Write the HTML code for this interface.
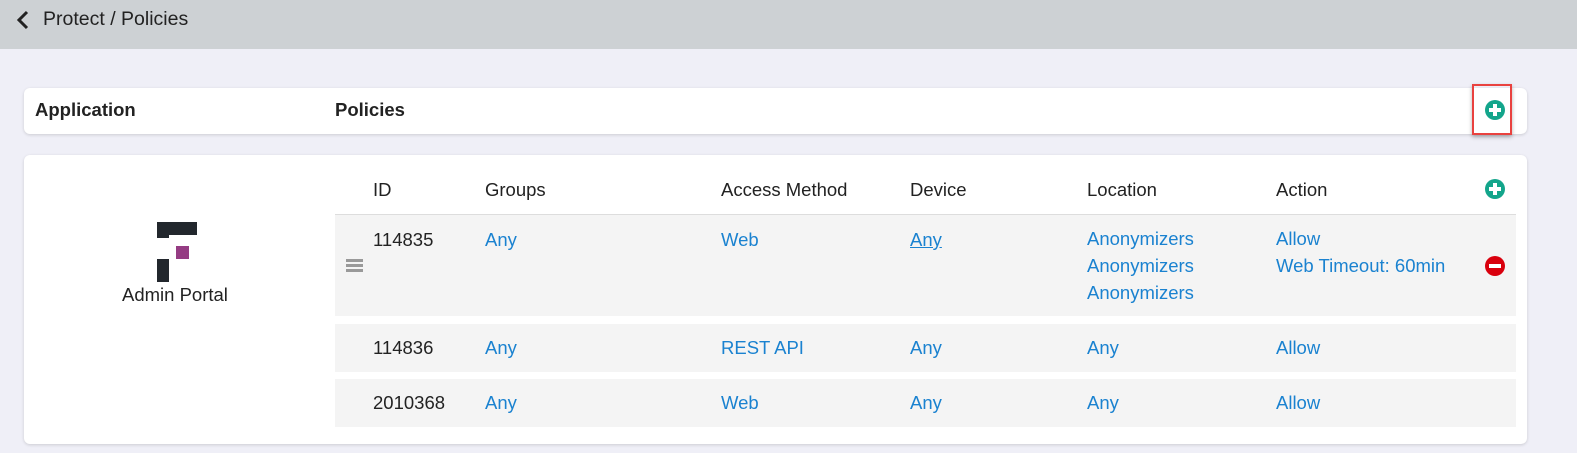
<!DOCTYPE html>
<html><head><style>
body{margin:0;width:1577px;height:453px;background:#efeff7;font-family:"Liberation Sans",sans-serif;position:relative;overflow:hidden;color:#222}
.t{position:absolute;font-size:18.5px;white-space:nowrap}
.b{color:#1a82d0}
.hdr{position:absolute;left:0;top:0;width:1577px;height:49px;background:#cdd1d4}
.card{position:absolute;background:#fff;border-radius:6px;box-shadow:0 1px 3px rgba(0,0,0,.15)}
.row{position:absolute;left:335px;width:1181px;background:#f4f4f4}
</style></head><body>
<div class="hdr"></div>
<svg style="position:absolute;left:15px;top:10px" width="16" height="20"><path d="M12 2 L4 10 L12 18" stroke="#222" stroke-width="3" fill="none"/></svg>
<div class="t" style="left:43px;top:8px;font-size:19.5px">Protect / Policies</div>
<div class="card" style="left:24px;top:88px;width:1503px;height:46px"></div>
<div class="t" style="left:35px;top:99px;font-weight:bold">Application</div>
<div class="t" style="left:335px;top:99px;font-weight:bold">Policies</div>
<div style="position:absolute;left:1472px;top:84px;width:40px;height:51px;border:2px solid #e9423f;box-sizing:border-box;box-shadow:0 2px 4px rgba(0,0,0,.3)"></div>
<svg style="position:absolute;left:1484px;top:99px" width="22" height="22"><circle cx="11" cy="11" r="10" fill="#13a58b"/><path d="M11 5v12M5 11h12" stroke="#fff" stroke-width="4"/></svg>
<div class="card" style="left:24px;top:155px;width:1503px;height:289px"></div>
<div style="position:absolute;left:157px;top:222px;width:40px;height:13px;background:#22272d"></div>
<div style="position:absolute;left:157px;top:222px;width:12px;height:16px;background:#22272d"></div>
<div style="position:absolute;left:157px;top:259px;width:12px;height:23px;background:#22272d"></div>
<div style="position:absolute;left:176px;top:246px;width:13px;height:13px;background:#953c83"></div>
<div class="t" style="left:122px;top:284px">Admin Portal</div>
<div class="t" style="left:373px;top:179px">ID</div>
<div class="t" style="left:485px;top:179px">Groups</div>
<div class="t" style="left:721px;top:179px">Access Method</div>
<div class="t" style="left:910px;top:179px">Device</div>
<div class="t" style="left:1087px;top:179px">Location</div>
<div class="t" style="left:1276px;top:179px">Action</div>
<svg style="position:absolute;left:1484px;top:178px" width="22" height="22"><circle cx="11" cy="11" r="10" fill="#13a58b"/><path d="M11 5v12M5 11h12" stroke="#fff" stroke-width="4"/></svg>
<div style="position:absolute;left:335px;top:214px;width:1181px;height:1px;background:#ddd"></div>
<div class="row" style="top:215px;height:101px"></div>
<div class="row" style="top:324px;height:48px"></div>
<div class="row" style="top:379px;height:48px"></div>
<div style="position:absolute;left:346px;top:259px;width:17px;height:3px;background:#999;box-shadow:0 5px 0 #999,0 10px 0 #999"></div>
<div class="t" style="left:373px;top:229px">114835</div>
<div class="t b" style="left:485px;top:229px">Any</div>
<div class="t b" style="left:721px;top:229px">Web</div>
<div class="t b" style="left:910px;top:229px;text-decoration:underline">Any</div>
<div class="t b" style="left:1087px;top:225px;line-height:27px">Anonymizers<br>Anonymizers<br>Anonymizers</div>
<div class="t b" style="left:1276px;top:225px;line-height:27px">Allow<br>Web Timeout: 60min</div>
<svg style="position:absolute;left:1484px;top:255px" width="22" height="22"><circle cx="11" cy="11" r="10" fill="#d9000d"/><path d="M5 11h12" stroke="#fff" stroke-width="4"/></svg>
<div class="t" style="left:373px;top:337px">114836</div>
<div class="t b" style="left:485px;top:337px">Any</div>
<div class="t b" style="left:721px;top:337px">REST API</div>
<div class="t b" style="left:910px;top:337px">Any</div>
<div class="t b" style="left:1087px;top:337px">Any</div>
<div class="t b" style="left:1276px;top:337px">Allow</div>
<div class="t" style="left:373px;top:392px">2010368</div>
<div class="t b" style="left:485px;top:392px">Any</div>
<div class="t b" style="left:721px;top:392px">Web</div>
<div class="t b" style="left:910px;top:392px">Any</div>
<div class="t b" style="left:1087px;top:392px">Any</div>
<div class="t b" style="left:1276px;top:392px">Allow</div>
</body></html>
